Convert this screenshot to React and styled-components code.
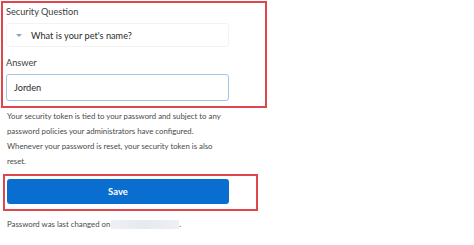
import styled, { createGlobalStyle } from 'styled-components';

const GlobalStyle = createGlobalStyle`
    html, body {
        margin: 0;
        padding: 0;
        background: #ffffff;
    }
    body {
        font-family: Lato, "Noto Sans", sans-serif;
        color: #3e3e3c;
    }
`;

const Page = styled.div`
    width: 474px;
    height: 245px;
    padding: 1px 0 0 1px;
    box-sizing: border-box;
    overflow: hidden;
`;

const Highlight = styled.div`
    border: 2px solid #e0474c;
    box-sizing: border-box;
    width: ${(p) => p.$width}px;
    margin-left: ${(p) => p.$offset || 0}px;
    padding: ${(p) => p.$padding};
`;

const Field = styled.div`
    display: flex;
    flex-direction: column;
    width: 223px;
    margin-top: ${(p) => p.$top || 0}px;
`;

const Label = styled.label`
    font-size: 9.2px;
    line-height: 14px;
    color: #3e3e3c;
    margin-bottom: ${(p) => p.$gap}px;
`;

const SelectBox = styled.div`
    height: 24px;
    box-sizing: border-box;
    border: 1px solid #f3f3f3;
    border-radius: 3px;
    display: flex;
    align-items: center;
    gap: 9px;
    padding-left: 9px;
    font-size: 9.2px;
    color: #2b2b2b;
`;

const Caret = styled.span`
    width: 0;
    height: 0;
    border-left: 3px solid transparent;
    border-right: 3px solid transparent;
    border-top: 3px solid #9a9fa8;
`;

const Input = styled.div`
    height: 27px;
    box-sizing: border-box;
    border: 1px solid #a7c3e6;
    border-radius: 3px;
    display: flex;
    align-items: center;
    padding-left: 7px;
    font-size: 9.2px;
    color: #2b2b2b;
`;

const Help = styled.p`
    margin: 1px 0 5px 6px;
    width: 224px;
    font-size: 7.8px;
    line-height: 15px;
    color: #4a4a4a;
`;

const SaveButton = styled.button`
    width: 222px;
    height: 25px;
    border: none;
    border-radius: 3px;
    background: #0a6ed1;
    color: #ffffff;
    font-family: inherit;
    font-size: 9.5px;
    font-weight: 700;
    display: block;
`;

const Footer = styled.div`
    margin: 7px 0 0 6px;
    display: flex;
    align-items: center;
    font-size: 7.8px;
    line-height: 12px;
    color: #4a4a4a;
`;

const Redacted = styled.span`
    display: inline-block;
    width: 68px;
    height: 9px;
    margin-left: 1px;
    background: linear-gradient(90deg, #eef0f4, #e6e9ee 50%, #eef0f4);
`;

export default function App() {
    return (
        <Page>
            <GlobalStyle />
            <Highlight $width={266} $padding="2px 0 5px 3px">
                <Field>
                    <Label $gap={4}>Security Question</Label>
                    <SelectBox>
                        <Caret />
                        What is your pet's name?
                    </SelectBox>
                </Field>
                <Field $top={9}>
                    <Label $gap={4}>Answer</Label>
                    <Input>Jorden</Input>
                </Field>
            </Highlight>
            <Help>
                Your security token is tied to your password and subject to any
                password policies your administrators have configured.
                Whenever your password is reset, your security token is also
                reset.
            </Help>
            <Highlight $width={255} $offset={2} $padding="3px 0 5px 2px">
                <SaveButton>Save</SaveButton>
            </Highlight>
            <Footer>
                Password was last changed on<Redacted />.
            </Footer>
        </Page>
    );
}
